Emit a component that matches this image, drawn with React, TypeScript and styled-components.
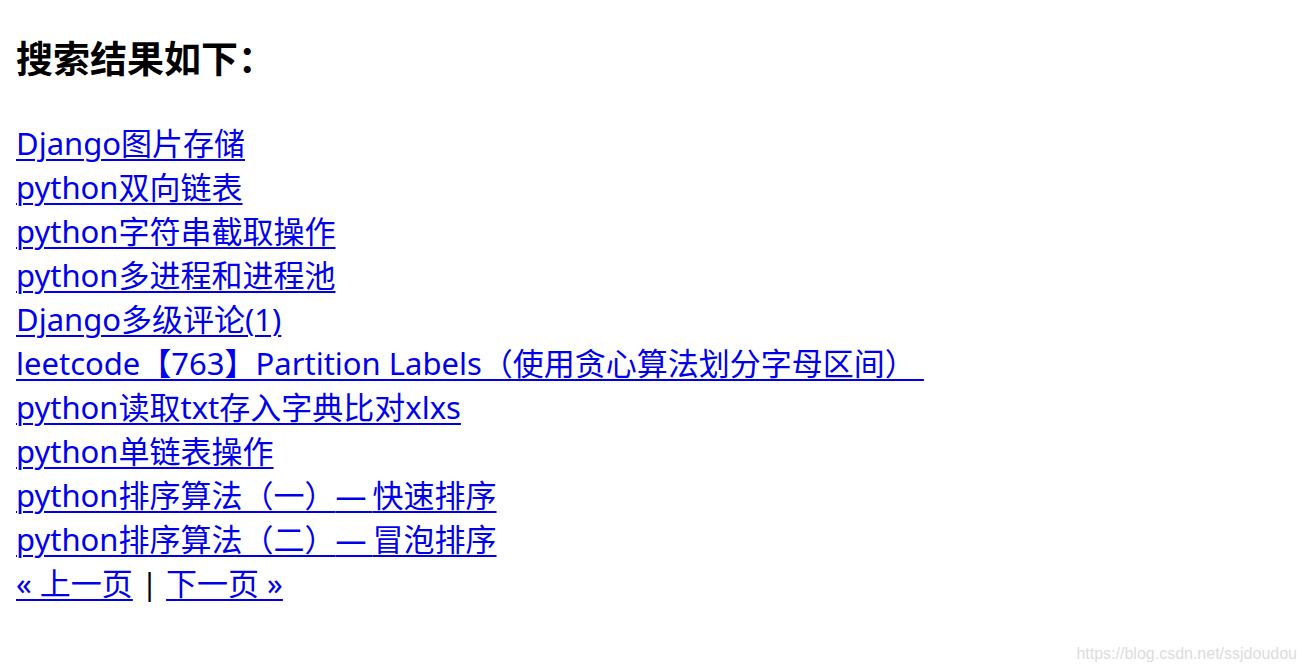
import * as React from "react"
import styled, { createGlobalStyle } from "styled-components"

const GlobalStyle = createGlobalStyle`
    html, body {
        margin: 0;
        padding: 0;
        background: #ffffff;
    }
    body {
        font-family: "Noto Sans", "Noto Sans CJK SC", sans-serif;
    }
`

const Page = styled.div`
    position: relative;
    width: 1306px;
    height: 672px;
    box-sizing: border-box;
    padding: 37px 16px 0 16px;
    overflow: hidden;
`

const Heading = styled.h3`
    margin: 0 0 40px 0;
    font-size: 37px;
    line-height: 44px;
    font-weight: bold;
    color: #000000;
`

const ResultList = styled.div`
    display: flex;
    flex-direction: column;
    align-items: flex-start;
    font-size: 31px;
    line-height: 44px;
`

const ResultLink = styled.a`
    color: #0000ee;
    text-decoration: underline;
    text-underline-offset: 4px;
    text-decoration-thickness: 2px;
    white-space: pre;
`

// the dash takes a full em in the original face
const Dash = styled.span`
    letter-spacing: 6px;
`

const Pager = styled.div`
    color: #000000;
    white-space: pre;
`

const Watermark = styled.div`
    position: absolute;
    right: 9px;
    bottom: 9px;
    font-size: 16px;
    color: #dcdcdc;
    font-family: "Liberation Sans", sans-serif;
`

const results = [
    "Django图片存储",
    "python双向链表",
    "python字符串截取操作",
    "python多进程和进程池",
    "Django多级评论(1)",
    "leetcode【763】Partition Labels（使用贪心算法划分字母区间） ",
    "python读取txt存入字典比对xlxs",
    "python单链表操作",
    "python排序算法（一）—快速排序",
    "python排序算法（二）—冒泡排序",
]

const renderTitle = (title: string): React.ReactNode => {
    const parts = title.split("—")
    if (parts.length === 1) {
        return title
    }
    return (
        <>
            {parts[0]}
            <Dash>—</Dash>
            {parts[1]}
        </>
    )
}

export default function App(): JSX.Element {
    return (
        <Page>
            <GlobalStyle />
            <Heading>搜索结果如下：</Heading>
            <ResultList>
                {results.map(title => (
                    <ResultLink key={title} href="#">
                        {renderTitle(title)}
                    </ResultLink>
                ))}
                <Pager>
                    <ResultLink href="#">« 上一页</ResultLink>
                    {" | "}
                    <ResultLink href="#">下一页 »</ResultLink>
                </Pager>
            </ResultList>
            <Watermark>https://blog.csdn.net/ssjdoudou</Watermark>
        </Page>
    )
}
